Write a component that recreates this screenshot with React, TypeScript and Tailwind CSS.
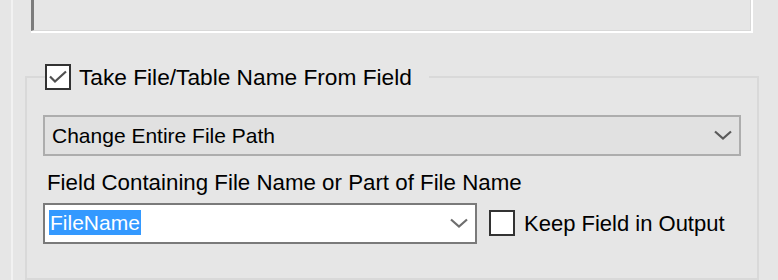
import React from 'react';

function Chevron({ className }: { className: string }) {
  return (
    <svg width="18" height="10" viewBox="0 0 18 10" className={className}>
      <path d="M1 1.5 L9 8.5 L17 1.5" fill="none" stroke="currentColor" strokeWidth="2.2" />
    </svg>
  );
}

export default function App() {
  return (
    <div className="w-[778px] h-[280px] bg-[#e6e6e6] overflow-hidden flex font-['Liberation_Sans',Arial,sans-serif] text-black">
      {/* left edge highlight */}
      <div className="ml-[11px] w-[2px] h-full bg-[#f2f2f2]"></div>

      <div className="flex flex-col">
        {/* --- sunken panel (cut off at top) --- */}
        <div className="ml-[18px] w-[722px] h-[39px] border-r-2 border-b-2 border-white">
          <div className="h-full border-l-[3px] border-[#7c7c7c] border-b border-b-[#d8d8d8] border-r border-r-[#d8d8d8]"></div>
        </div>

        {/* --- group box --- */}
        <fieldset className="ml-[12px] mt-[31px] w-[734px] h-[260px] border-2 border-[#d9d9d9] px-[16px]">
          <legend className="ml-[2px] pr-[17px] flex items-center h-[26px]">
            <span className="w-[26px] h-[26px] border-2 border-[#333333] bg-white flex items-center justify-center">
              <svg width="20" height="14" viewBox="0 0 20 14">
                <path d="M2 6.5 L7 11.5 L18 1.5" fill="none" stroke="#505050" strokeWidth="2.2" />
              </svg>
            </span>
            <span className="ml-[8px] text-[22.7px] leading-[26px]">Take File/Table Name From Field</span>
          </legend>

          {/* dropdown 1 */}
          <div className="mt-[25px] w-[698px] h-[41px] border-2 border-[#adadad] bg-[#e1e1e1] flex items-center pl-[7px] pr-[7px]">
            <span className="flex-1 text-[21px] leading-[25px]">Change Entire File Path</span>
            <Chevron className="text-[#5a5a5a]" />
          </div>

          <div className="mt-[14px] pl-[4px] text-[22.3px] leading-[25px]">
            Field Containing File Name or Part of File Name
          </div>

          <div className="mt-[8px] flex items-center">
            <div className="w-[434px] h-[41px] border-2 border-[#7a7a7a] bg-white flex items-center pl-[4px] pr-[7px]">
              <span className="flex-1">
                <span className="inline-block bg-[#3399ff] text-white text-[21px] leading-[25px] px-[1px]">FileName</span>
              </span>
              <Chevron className="text-[#6e6e6e]" />
            </div>
            <span className="ml-[12px] w-[26px] h-[26px] border-2 border-[#333333] bg-white"></span>
            <span className="ml-[9px] text-[22px] leading-[25px]">Keep Field in Output</span>
          </div>
        </fieldset>
      </div>
    </div>
  );
}
